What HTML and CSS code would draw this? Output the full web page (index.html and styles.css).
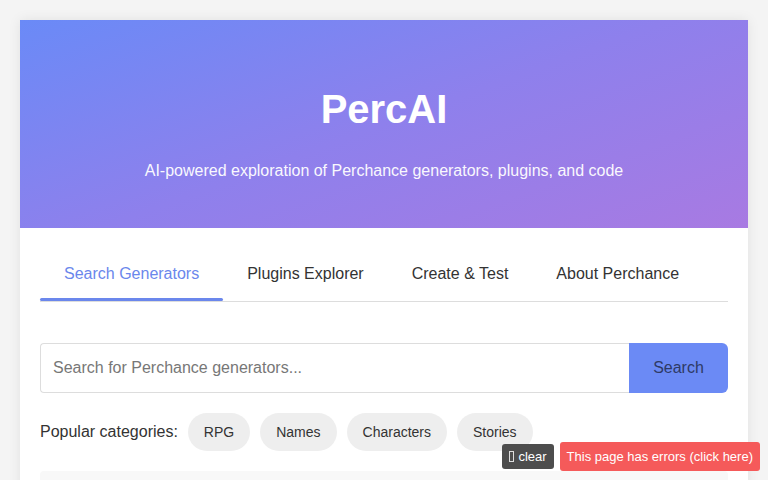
FILE: index.html
```html
<!DOCTYPE html>
<html>
<head>
<meta charset="utf-8">
<title>PercAI</title>
<link rel="stylesheet" href="styles.css">
</head>
<body>
<div class="card">
  <header class="hero">
    <h1>PercAI</h1>
    <p>AI-powered exploration of Perchance generators, plugins, and code</p>
  </header>
  <main class="content">
    <nav class="tabs">
      <div class="tab active">Search Generators</div>
      <div class="tab">Plugins Explorer</div>
      <div class="tab">Create &amp; Test</div>
      <div class="tab">About Perchance</div>
    </nav>
    <div class="search">
      <input class="search-input" type="text" placeholder="Search for Perchance generators...">
      <button class="search-btn">Search</button>
    </div>
    <div class="cats">
      <span class="cats-label">Popular categories:</span>
      <span class="chip">RPG</span>
      <span class="chip">Names</span>
      <span class="chip">Characters</span>
      <span class="chip">Stories</span>
    </div>
    <div class="results"></div>
  </main>
</div>
<div class="errbar">
  <span class="clear"><span class="tofu"></span>clear</span>
  <span class="err">This page has errors (click here)</span>
</div>
</body>
</html>
```

FILE: styles.css
```css
html, body {
  margin: 0;
  padding: 0;
  background: #f4f4f4;
  font-family: "Liberation Sans", Arial, sans-serif;
  color: #333;
}
body {
  padding: 20px;
}
.card {
  background: #fff;
  box-shadow: 0 0 12px rgba(0,0,0,0.08);
  min-height: 600px;
}
.hero {
  background: linear-gradient(160deg, #6a8af7 0%, #8e80ec 50%, #a87ae2 100%);
  color: #fff;
  text-align: center;
  padding: 40px 20px 48px;
}
.hero h1 {
  font-size: 40px;
  font-weight: bold;
  margin: 27px 0 30px;
}
.hero p {
  font-size: 16px;
  margin: 0;
  opacity: 0.95;
}
.content {
  padding: 20px;
}
.tabs {
  display: flex;
  border-bottom: 1px solid #ddd;
}
.tab {
  padding: 17px 24px 18px;
  font-size: 16px;
  color: #333;
  position: relative;
}
.tab.active {
  color: #6b87ec;
}
.tab.active::after {
  content: "";
  position: absolute;
  left: 0;
  right: 0;
  bottom: 0;
  height: 3px;
  background: #6b87ec;
  border-radius: 3px;
}
.search {
  display: flex;
  margin-top: 41px;
}
.search-input {
  flex: 1;
  height: 50px;
  box-sizing: border-box;
  border: 1px solid #ddd;
  border-right: none;
  border-radius: 4px 0 0 4px;
  padding: 0 12px;
  font-size: 16px;
  font-family: "Liberation Sans", Arial, sans-serif;
  color: #333;
  outline: none;
}
.search-input::placeholder {
  color: #777;
}
.search-btn {
  width: 99px;
  height: 50px;
  border: none;
  border-radius: 0 6px 6px 0;
  background: #6b8af5;
  color: #2e3a66;
  font-size: 16px;
  font-family: "Liberation Sans", Arial, sans-serif;
}
.cats {
  display: flex;
  align-items: center;
  gap: 10px;
  margin-top: 20px;
}
.cats-label {
  font-size: 16px;
  color: #333;
}
.chip {
  background: #eee;
  border-radius: 19px;
  padding: 11px 16px 11px;
  font-size: 14px;
  color: #333;
}
.results {
  margin-top: 20px;
  height: 200px;
  background: #f8f8f8;
  border-radius: 4px;
}
.errbar {
  position: fixed;
  right: 8px;
  bottom: 9px;
  display: flex;
  align-items: center;
  gap: 6px;
  font-size: 13px;
}
.clear {
  background: #4d4d4d;
  color: #fff;
  border-radius: 3px;
  padding: 5px 7px;
  display: flex;
  align-items: center;
}
.tofu {
  display: inline-block;
  width: 3px;
  height: 9px;
  border: 1px solid #ddd;
  margin-right: 4px;
}
.err {
  background: #f55a5a;
  color: #fff;
  border-radius: 3px;
  padding: 7px 7px;
}
```
